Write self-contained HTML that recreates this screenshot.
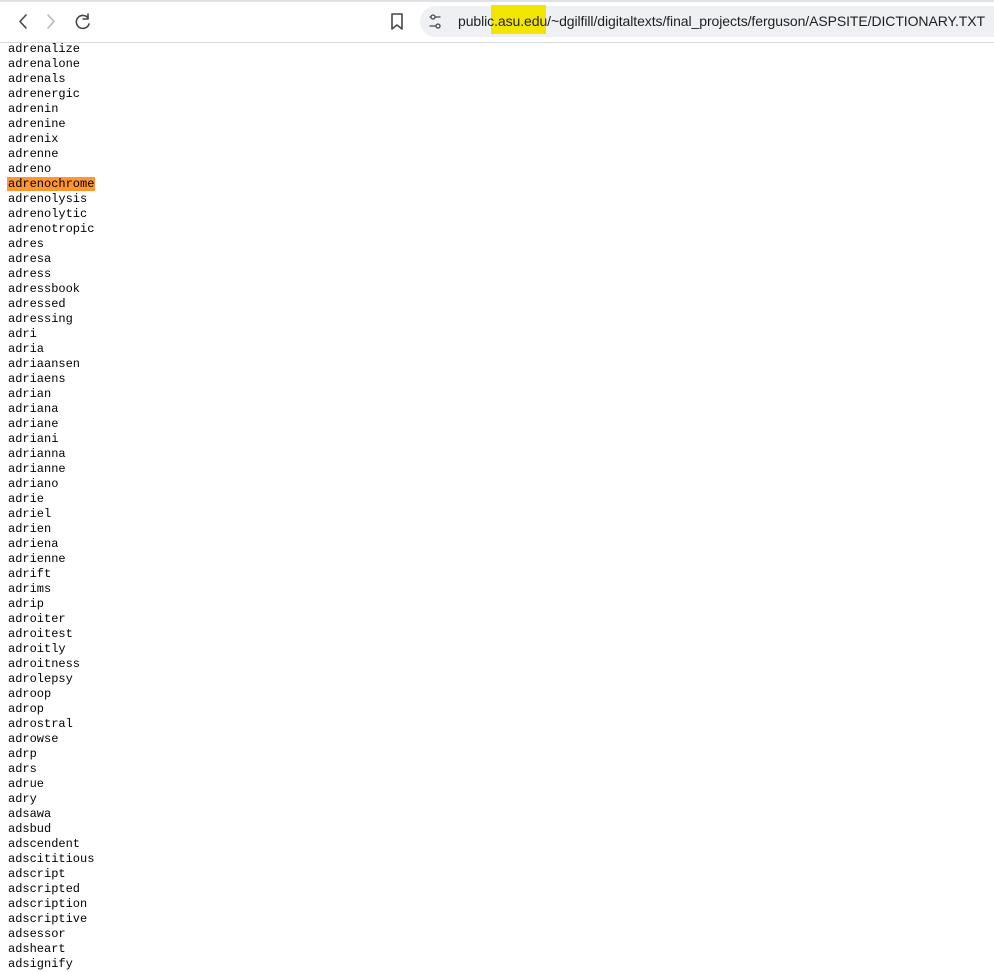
<!DOCTYPE html>
<html><head><style>
*{margin:0;padding:0}
body{width:994px;height:971px;overflow:hidden;background:#fff;font-family:"Liberation Sans",sans-serif;position:relative}
.top{position:absolute;left:0;top:0;width:994px;height:2px;background:#dfe1e5}
.bar{position:absolute;left:0;top:2px;width:994px;height:40px;background:#fff;border-bottom:1px solid #dadce0}
.addr{position:absolute;left:420px;top:6px;width:590px;height:31px;background:#eef0f4;border-radius:16px}
.url{position:absolute;left:458px;top:13px;font-size:14px;color:#1f1f1f;white-space:nowrap;letter-spacing:-0.08px}
.hl{position:absolute;left:491px;top:5px;width:55px;height:29px;background:#f2e600}
pre{position:absolute;left:8px;top:42px;font-family:"Liberation Mono",monospace;font-size:12px;line-height:15px;color:#000}
mark{background:#ff9632;color:#000;padding:0 1px;margin:0 -1px}
</style></head><body>
<div class="top"></div>
<div class="bar"></div>
<div class="addr"></div>
<div class="hl"></div>
<svg style="position:absolute;left:0;top:0" width="460" height="42">
<g fill="none" stroke="#474747" stroke-width="1.6" stroke-linecap="round" stroke-linejoin="round">
<path d="M26 15 L20 21.5 L26 28"/>
<path d="M48 15 L54 21.5 L48 28" stroke="#b8b8b8"/>
<path d="M88 18 A6.5 6.5 0 1 0 89 24"/><path d="M88 14 V19 H83" />
<path d="M392 14 H402 V29 L397 25 L392 29 Z"/>
<path d="M430 17 H440 M430 26 H440" stroke-width="1.3"/>
<circle cx="433" cy="17" r="2" fill="#eef0f4" stroke-width="1.3"/><circle cx="438" cy="26" r="2" fill="#eef0f4" stroke-width="1.3"/>
</g></svg>
<div class="url">public.asu.edu/~dgilfill/digitaltexts/final_projects/ferguson/ASPSITE/DICTIONARY.TXT</div>
<pre>adrenalize
adrenalone
adrenals
adrenergic
adrenin
adrenine
adrenix
adrenne
adreno
<mark>adrenochrome</mark>
adrenolysis
adrenolytic
adrenotropic
adres
adresa
adress
adressbook
adressed
adressing
adri
adria
adriaansen
adriaens
adrian
adriana
adriane
adriani
adrianna
adrianne
adriano
adrie
adriel
adrien
adriena
adrienne
adrift
adrims
adrip
adroiter
adroitest
adroitly
adroitness
adrolepsy
adroop
adrop
adrostral
adrowse
adrp
adrs
adrue
adry
adsawa
adsbud
adscendent
adscititious
adscript
adscripted
adscription
adscriptive
adsessor
adsheart
adsignify</pre>
</body></html>
